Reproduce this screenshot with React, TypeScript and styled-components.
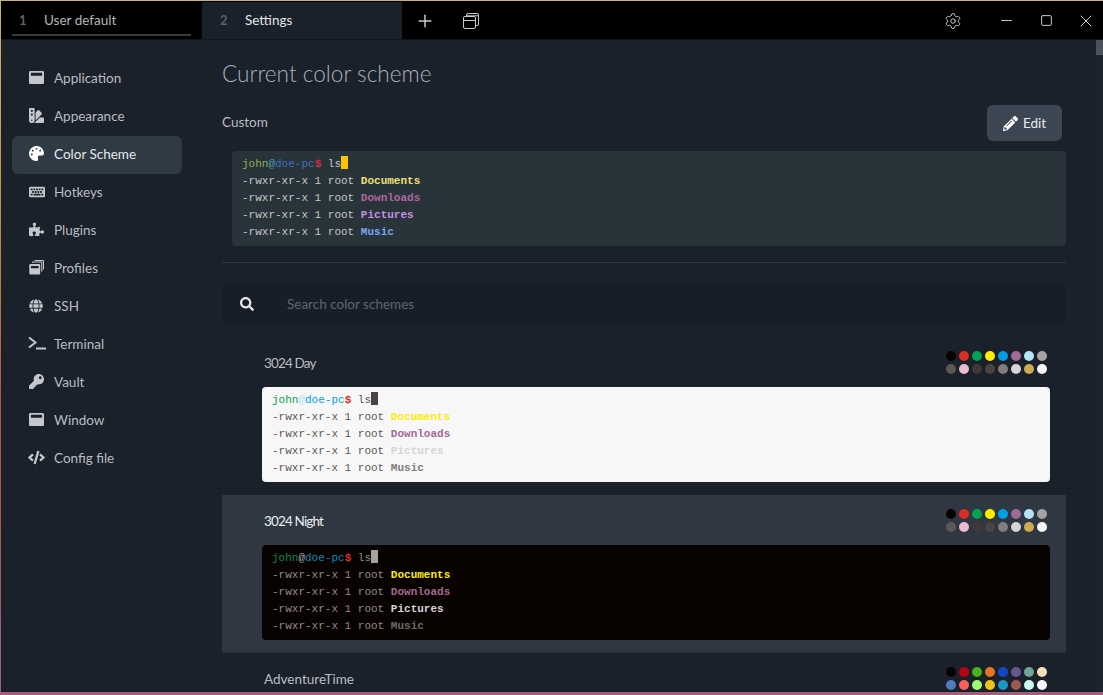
import React from 'react';
import styled, { createGlobalStyle } from 'styled-components';
import { FaPencilAlt, FaSearch, FaPalette, FaKeyboard, FaPuzzlePiece, FaGlobe, FaKey, FaCode, FaWindowMaximize, FaSwatchbook } from 'react-icons/fa';
import { Plus, Settings as Gear, Minus, Square, X } from 'lucide-react';

const GlobalStyle = createGlobalStyle`
    html, body {
        margin: 0;
        height: 100%;
        overflow: hidden;
        background: #1a212b;
    }
    #root {
        height: 100%;
    }
`;

const Frame = styled.div`
    box-sizing: border-box;
    height: 695px;
    display: flex;
    flex-direction: column;
    padding: 1px 0 3px 1px;
    background: linear-gradient(180deg, #c9b27a 0%, #c79a3a 25%, #b5503f 60%, #a0607a 100%);
    font-family: "Lato", sans-serif;
`;
const Inner = styled.div`
    flex: 1;
    min-height: 0;
    display: flex;
    flex-direction: column;
    background: #1a212b;
`;
const TitleBar = styled.div`
    box-sizing: border-box;
    height: 39px;
    flex: none;
    display: flex;
    align-items: stretch;
    background: #000;
    padding-top: 1px;
    border-bottom: 1px solid #10151b;
`;
const Tab = styled.div<{ $active?: boolean }>`
    box-sizing: border-box;
    width: ${p => (p.$active ? '200px' : '201px')};
    display: flex;
    align-items: center;
    padding: 0 18px 2px;
    font-size: 13.5px;
    color: ${p => (p.$active ? '#e2e4e6' : '#b4b6b8')};
    background: ${p => (p.$active ? '#1a212b' : 'transparent')};
    position: relative;
`;
const TabUnderline = styled.div`
    position: absolute;
    left: 11px;
    right: 11px;
    bottom: 3px;
    height: 2px;
    background: #3a3a3a;
`;
const TabIndex = styled.span`
    width: 25px;
    font-weight: 700;
    color: #5c6064;
    font-size: 13px;
`;
const BarButton = styled.div`
    width: 46px;
    display: flex;
    align-items: center;
    justify-content: center;
    color: #c8c8c8;
`;
const GearButton = styled(BarButton)`
    margin-right: 10px;
`;
const WindowButton = styled(BarButton)`
    width: 40px;
    &:last-child {
        width: 34px;
        margin-left: 3px;
    }
`;
const Spacer = styled.div`
    flex: 1;
`;
const Body = styled.div`
    flex: 1;
    min-height: 0;
    display: flex;
`;
const Sidebar = styled.nav`
    width: 181px;
    flex: none;
    padding: 20px 0 0 11px;
    box-sizing: border-box;
`;
const NavItem = styled.div<{ $active?: boolean }>`
    box-sizing: border-box;
    width: 170px;
    height: 38px;
    padding-bottom: 3px;
    display: flex;
    align-items: center;
    border-radius: 6px;
    font-size: 13.5px;
    color: ${p => (p.$active ? '#e6e8ea' : '#b9bdc2')};
    background: ${p => (p.$active ? '#2f3a44' : 'transparent')};
`;
const NavIcon = styled.div<{ $active?: boolean }>`
    width: 42px;
    padding-left: 17px;
    box-sizing: border-box;
    display: flex;
    align-items: center;
    color: ${p => (p.$active ? '#fff' : '#c4c8cd')};
    flex: none;
`;
const Main = styled.main`
    flex: 1;
    min-width: 0;
    padding: 0 30px 0 40px;
    overflow: hidden;
`;
const Heading = styled.h1`
    margin: 18px 0 0;
    font-size: 22.6px;
    line-height: 32px;
    font-weight: 300;
    color: #aab0b7;
`;
const CurrentRow = styled.div`
    height: 36px;
    margin-top: 15px;
    display: flex;
    align-items: center;
    justify-content: space-between;
    padding-right: 4px;
    font-size: 13.5px;
    color: #b9bdc2;
`;
const CurrentName = styled.span`
    margin-bottom: 3px;
`;
const EditButton = styled.div`
    width: 75px;
    height: 36px;
    border-radius: 6px;
    background: #3c4753;
    color: #eceef0;
    display: flex;
    align-items: center;
    justify-content: center;
    gap: 5px;
    font-size: 13.5px;
    svg {
        color: #fff;
    }
`;
const Preview = styled.div<{ $bg: string; $fg: string; $inset?: boolean }>`
    margin: ${p => (p.$inset ? '0 16px 0 40px' : '10px 0 0 10px')};
    padding: 5px 10px;
    border-radius: 4px;
    background: ${p => p.$bg};
    color: ${p => p.$fg};
    font-family: "Liberation Mono", monospace;
    font-size: 11px;
    line-height: 17px;
    white-space: pre;
`;
const Bold = styled.span<{ $c: string }>`
    font-weight: 700;
    color: ${p => p.$c};
`;
const Tint = styled.span<{ $c: string; $bold?: boolean }>`
    color: ${p => p.$c};
    font-weight: ${p => (p.$bold ? 700 : 400)};
`;
const Cursor = styled.span<{ $c: string }>`
    display: inline-block;
    width: 7px;
    height: 13px;
    vertical-align: -2px;
    background: ${p => p.$c};
`;
const Divider = styled.hr`
    border: 0;
    border-top: 1px solid #2f3740;
    margin: 16px 0 0;
`;
const SearchRow = styled.div`
    height: 41px;
    margin: 20px 0 13px;
    display: flex;
    align-items: center;
    background: #181e27;
    color: #e4e6e8;
    font-size: 13.5px;
`;
const SearchIcon = styled.div`
    width: 65px;
    padding-left: 18px;
    box-sizing: border-box;
    display: flex;
    align-items: center;
`;
const Placeholder = styled.span`
    color: #5f666e;
`;
const Scheme = styled.section<{ $active?: boolean }>`
    height: 158px;
    box-sizing: border-box;
    padding-top: 7px;
    background: ${p => (p.$active ? '#2f3742' : 'transparent')};
    border-bottom: 1px solid ${p => (p.$active ? '#262d36' : 'transparent')};
`;
const SchemeHead = styled.div`
    height: 37px;
    margin-bottom: 6px;
    display: flex;
    align-items: center;
    justify-content: space-between;
    padding: 0 19px 0 42px;
`;
const SchemeName = styled.div<{ $active?: boolean; $numbered?: boolean }>`
    font-size: 13.5px;
    letter-spacing: ${p => (p.$numbered ? '-0.85px' : '0')};
    color: ${p => (p.$active ? '#eceef0' : '#b9bdc2')};
`;
const Swatches = styled.div`
    display: grid;
    grid-template-columns: repeat(8, 10px);
    gap: 3px 3px;
`;
const Swatch = styled.span<{ $c: string }>`
    width: 10px;
    height: 10px;
    border-radius: 50%;
    background: ${p => p.$c};
`;
const ScrollTrack = styled.div`
    width: 7px;
    flex: none;
    background: #1c232c;
`;
const ScrollThumb = styled.div`
    height: 15px;
    background: #4a525b;
`;

const tabs = [
    { n: 1, label: 'User default' },
    { n: 2, label: 'Settings', active: true },
];

function ProfilesIcon() {
    return (
        <svg width="15" height="15" viewBox="0 0 15 15">
            <path fill="currentColor" fillRule="evenodd" d="M1.500 4h8.500a1.200 1.200 0 0 1 1.200 1.200v8.100a1.200 1.200 0 0 1-1.200 1.200h-8.500a1.200 1.200 0 0 1-1.200-1.200v-8.100a1.200 1.200 0 0 1 1.200-1.200zM2 6v2.200h7.500V6z" />
            <path fill="currentColor" d="M3 3V2.400a1 1 0 0 1 1-1h8.500a.8.8 0 0 1 .8 .8v9.300h-1.100V2.500H4V3z" />
            <path fill="currentColor" d="M5.500 1V.8a.8.8 0 0 1 .8-.8h7.700a1 1 0 0 1 1 1v8.500h-1V1z" />
        </svg>
    );
}
function TerminalIcon() {
    return (
        <svg width="18" height="15" viewBox="0 0 18 15" style={{ marginLeft: -1 }}>
            <path fill="none" stroke="currentColor" strokeWidth="2" d="M1 1.500l6.500 5-6.500 5" />
            <path stroke="currentColor" strokeWidth="2" d="M8 12.500H18" />
        </svg>
    );
}
function TabsIcon() {
    return (
        <svg width="16" height="16" viewBox="0 0 16 16" fill="none" stroke="currentColor" strokeWidth="1">
            <rect x="0.500" y="3.500" width="12" height="12" rx="1.500" />
            <path d="M.5 7.500h12M3.500 3.500V2a1.500 1.500 0 0 1 1.500-1.500h9A1.500 1.500 0 0 1 15.500 2v9a1.500 1.500 0 0 1-1.500 1.500h-1.500M3.500 2.800h12" />
        </svg>
    );
}

const navItems: { label: string; icon: React.ReactNode; active?: boolean }[] = [
    { label: 'Application', icon: <FaWindowMaximize size={15} /> },
    { label: 'Appearance', icon: <FaSwatchbook size={15} /> },
    { label: 'Color Scheme', icon: <FaPalette size={15} />, active: true },
    { label: 'Hotkeys', icon: <FaKeyboard size={16} /> },
    { label: 'Plugins', icon: <FaPuzzlePiece size={15} /> },
    { label: 'Profiles', icon: <ProfilesIcon /> },
    { label: 'SSH', icon: <FaGlobe size={14} /> },
    { label: 'Terminal', icon: <TerminalIcon /> },
    { label: 'Vault', icon: <FaKey size={15} /> },
    { label: 'Window', icon: <FaWindowMaximize size={15} /> },
    { label: 'Config file', icon: <FaCode size={17} style={{ marginLeft: -1 }} /> },
];

interface Colors {
    bg: string;
    fg: string;
    user: string;
    at: string;
    host: string;
    dollar: string;
    cursor: string;
    docs: string;
    downloads: string;
    pictures: string;
    music: string;
}

const day: Colors = {
    bg: '#f7f7f7', fg: '#5c5855', user: '#01a252', at: '#b5e4f4', host: '#01a0e4', dollar: '#db2d20',
    cursor: '#4a4543', docs: '#fded02', downloads: '#a16a94', pictures: '#d6d5d4', music: '#807d7c',
};
const night: Colors = {
    bg: '#090300', fg: '#8e8b8a', user: '#0c8a4a', at: '#a5a2a2', host: '#0a86bc', dollar: '#db2d20',
    cursor: '#a5a2a2', docs: '#fded02', downloads: '#a16a94', pictures: '#d6d5d4', music: '#6e6a68',
};
const current: Colors = {
    bg: '#29333a', fg: '#c5c8c6', user: '#8ab04a', at: '#3f9fb0', host: '#3f6fc0', dollar: '#cc2f45',
    cursor: '#fdc400', docs: '#efe070', downloads: '#b067a0', pictures: '#c78fe0', music: '#78a6f2',
};

const dayPalette = [
    '#090300', '#db2d20', '#01a252', '#fded02', '#01a0e4', '#a16a94', '#b5e4f4', '#a5a2a2',
    '#5c5855', '#e8bbd0', '#3e3936', '#4a4543', '#807d7c', '#d6d5d4', '#cdab53', '#f7f7f7',
];
const adventurePalette = [
    '#050404', '#bd0013', '#4ab118', '#e7741e', '#0f4ac6', '#665993', '#70a598', '#f8dcc0',
    '#4e7cbf', '#fc5f5a', '#9eff6e', '#efc11a', '#1997c6', '#9b5953', '#c8faf4', '#f6f5fb',
];

function Terminal({ c, inset }: { c: Colors; inset?: boolean }) {
    return (
        <Preview $bg={c.bg} $fg={c.fg} $inset={inset}>
            <div>
                <Tint $c={c.user}>john</Tint>
                <Tint $c={c.at}>@</Tint>
                <Tint $c={c.host}>doe-pc</Tint>
                <Tint $c={c.dollar} $bold>$</Tint> ls<Cursor $c={c.cursor} />
            </div>
            <div>-rwxr-xr-x 1 root <Bold $c={c.docs}>Documents</Bold></div>
            <div>-rwxr-xr-x 1 root <Bold $c={c.downloads}>Downloads</Bold></div>
            <div>-rwxr-xr-x 1 root <Bold $c={c.pictures}>Pictures</Bold></div>
            <div>-rwxr-xr-x 1 root <Bold $c={c.music}>Music</Bold></div>
        </Preview>
    );
}

function SchemeRow({ name, palette, colors, active }: { name: string; palette: string[]; colors?: Colors; active?: boolean }) {
    return (
        <Scheme $active={active}>
            <SchemeHead>
                <SchemeName $active={active} $numbered={/^\d/.test(name)}>{name}</SchemeName>
                <Swatches>
                    {palette.map((c, i) => <Swatch key={i} $c={c} />)}
                </Swatches>
            </SchemeHead>
            {colors && <Terminal c={colors} inset />}
        </Scheme>
    );
}

export default function App() {
    return (
        <>
            <GlobalStyle />
            <Frame>
                <Inner>
                    <TitleBar>
                        {tabs.map(t => (
                            <Tab key={t.n} $active={t.active}>
                                <TabIndex>{t.n}</TabIndex>
                                {t.label}
                                {!t.active && <TabUnderline />}
                            </Tab>
                        ))}
                        <BarButton><Plus size={20} strokeWidth={1.5} absoluteStrokeWidth /></BarButton>
                        <BarButton><TabsIcon /></BarButton>
                        <Spacer />
                        <GearButton><Gear size={18} strokeWidth={1} absoluteStrokeWidth /></GearButton>
                        <WindowButton><Minus size={17} strokeWidth={1} absoluteStrokeWidth /></WindowButton>
                        <WindowButton><Square size={13} strokeWidth={1} absoluteStrokeWidth /></WindowButton>
                        <WindowButton><X size={20} strokeWidth={1} absoluteStrokeWidth /></WindowButton>
                    </TitleBar>
                    <Body>
                        <Sidebar>
                            {navItems.map(item => (
                                <NavItem key={item.label} $active={item.active}>
                                    <NavIcon $active={item.active}>{item.icon}</NavIcon>
                                    {item.label}
                                </NavItem>
                            ))}
                        </Sidebar>
                        <Main>
                            <Heading>Current color scheme</Heading>
                            <CurrentRow>
                                <CurrentName>Custom</CurrentName>
                                <EditButton><FaPencilAlt size={15} /> Edit</EditButton>
                            </CurrentRow>
                            <Terminal c={current} />
                            <Divider />
                            <SearchRow>
                                <SearchIcon><FaSearch size={14} /></SearchIcon>
                                <Placeholder>Search color schemes</Placeholder>
                            </SearchRow>
                            <SchemeRow name="3024 Day" palette={dayPalette} colors={day} />
                            <SchemeRow name="3024 Night" palette={dayPalette} colors={night} active />
                            <SchemeRow name="AdventureTime" palette={adventurePalette} />
                        </Main>
                        <ScrollTrack><ScrollThumb /></ScrollTrack>
                    </Body>
                </Inner>
            </Frame>
        </>
    );
}
